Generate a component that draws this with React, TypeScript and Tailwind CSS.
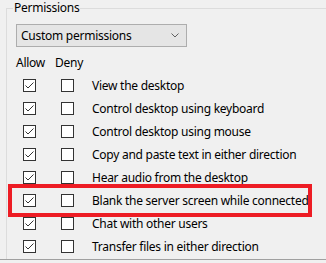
import React from "react";

const perms = [
  { label: "View the desktop", allow: true, deny: false },
  { label: "Control desktop using keyboard", allow: true, deny: false },
  { label: "Control desktop using mouse", allow: true, deny: false },
  { label: "Copy and paste text in either direction", allow: true, deny: false },
  { label: "Hear audio from the desktop", allow: true, deny: false },
  { label: "Blank the server screen while connected", allow: true, deny: false, marked: true },
  { label: "Chat with other users", allow: true, deny: false },
  { label: "Transfer files in either direction", allow: true, deny: false },
];

function Box({ checked }: { checked: boolean }) {
  return (
    <span className="block w-[13px] h-[13px] border border-[#333333] bg-white">
      {checked && (
        <svg width="11" height="11" viewBox="0 0 11 11" className="block">
          <path d="M1.5 5.5 L4 8 L9.5 2.5" fill="none" stroke="#333333" strokeWidth="1" />
        </svg>
      )}
    </span>
  );
}

export default function App() {
  return (
    <div
      className="w-[326px] h-[263px] bg-[#f0f0f0] overflow-hidden text-[12px] leading-[16px] tracking-[-0.26px] text-black"
      style={{ fontFamily: '"Noto Sans", "Segoe UI", sans-serif' }}
    >
      <fieldset className="ml-[6px] w-[340px] h-[259px] border-t border-l border-[#dcdcdc]">
        <legend className="ml-[6px] px-[1px]">Permissions</legend>

        <div className="ml-[9px] mt-[8px] w-[171px] h-[23px] border border-[#adadad] bg-[#e5e5e5] flex items-center justify-between pl-[4px] pr-[7px]">
          <span>Custom permissions</span>
          <svg width="8" height="5" viewBox="0 0 8 5">
            <path d="M0.5 0.5 L4 4 L7.5 0.5" fill="none" stroke="#606060" strokeWidth="1" />
          </svg>
        </div>

        <div className="ml-[9px] mt-[8px] flex">
          <span className="w-[39px]">Allow</span>
          <span>Deny</span>
        </div>

        <div className="mt-[3px] flex flex-col">
          {perms.map((p) => (
            <div key={p.label} className="relative h-[23px] flex items-center pl-[16px]">
              <span className="w-[38px]">
                <Box checked={p.allow} />
              </span>
              <span className="w-[31px]">
                <Box checked={p.deny} />
              </span>
              <span className="whitespace-nowrap">{p.label}</span>
              {p.marked && (
                <span className="absolute left-px -top-[5px] w-[304px] h-[33px] border-4 border-[#ed1c24]" />
              )}
            </div>
          ))}
        </div>
      </fieldset>
      <div className="h-px bg-[#a0a0a0]" />
    </div>
  );
}
